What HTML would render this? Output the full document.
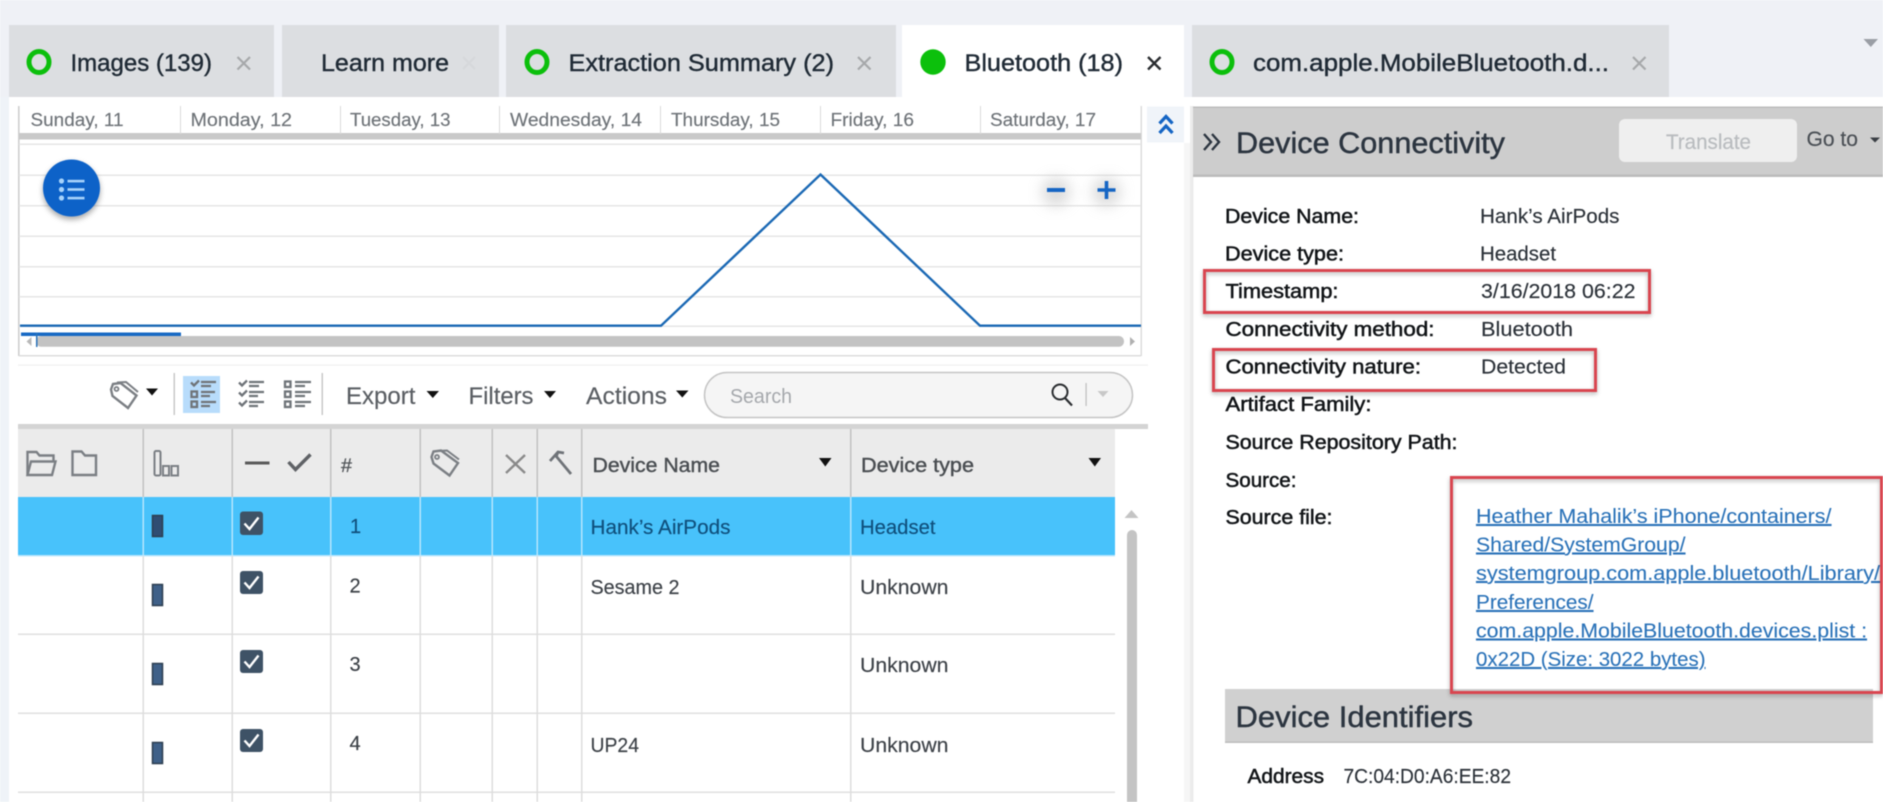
<!DOCTYPE html>
<html><head><meta charset="utf-8"><title>Bluetooth</title>
<style>
html,body{margin:0;padding:0;background:#fff;width:1883px;height:802px;overflow:hidden}
svg{display:block;filter:blur(.5px)}
text{font-family:"Liberation Sans",sans-serif;white-space:pre}
.tab{font-size:24px;fill:#1f2a35;stroke:#1f2a35;stroke-width:.4px}
.day{font-size:18px;fill:#6e7378;stroke:#6e7378;stroke-width:.15px}
.lab{font-size:20px;fill:#111417;stroke:#111417;stroke-width:.5px}
.val{font-size:20px;fill:#2b3138;stroke:#2b3138;stroke-width:.15px}
.lnk{font-size:20px;fill:#2a72b8;stroke:#2a72b8;stroke-width:.1px;text-decoration:underline}
.tool{font-size:24px;fill:#5a5e63;stroke:#5a5e63;stroke-width:.15px}
.cell{font-size:20px;fill:#3c4147;stroke:#3c4147;stroke-width:.15px}
.sel{font-size:20px;fill:#0f4f7c;stroke:#0f4f7c;stroke-width:.15px}
.hd{font-size:20px;fill:#4a4e52;stroke:#4a4e52;stroke-width:.4px}
.ttl{font-size:30px;fill:#2c3540;stroke:#2c3540;stroke-width:.45px}
.ic{fill:none;stroke:#7b7f84;stroke-width:2.4}
</style></head><body>
<svg width="1883" height="802" viewBox="0 0 1883 802" xmlns="http://www.w3.org/2000/svg" lang="en" shape-rendering="geometricPrecision">
<defs>
<filter id="sh" x="-50%" y="-50%" width="200%" height="200%"><feDropShadow dx="0" dy="3" stdDeviation="3" flood-color="#000" flood-opacity=".35"/></filter>
<filter id="sh2" x="-30%" y="-30%" width="160%" height="160%"><feDropShadow dx="0" dy="2" stdDeviation="2" flood-color="#000" flood-opacity=".3"/></filter>
<filter id="bl" x="-50%" y="-50%" width="200%" height="200%"><feGaussianBlur stdDeviation="7"/></filter>
</defs>

<!-- page background -->
<rect width="1883" height="97" fill="#eff1f6"/>
<rect y="97" width="9" height="705" fill="#eff3f8"/>

<!-- tabs -->
<rect x="9" y="25" width="265" height="72" fill="#dcdee1"/>
<rect x="282" y="25" width="217" height="72" fill="#dcdee1"/>
<rect x="506" y="25" width="390" height="72" fill="#dcdee1"/>
<rect x="902" y="25" width="282" height="72" fill="#fff"/>
<rect x="1192" y="25" width="477" height="72" fill="#dcdee1"/>

<ellipse cx="39" cy="62" rx="10" ry="10.5" fill="none" stroke="#0cbf0c" stroke-width="5"/>
<text class="tab" x="70.5" y="71" textLength="141.5" lengthAdjust="spacingAndGlyphs">Images (139)</text>
<path d="M237.5 57l12.5 12.5M250 57l-12.5 12.5" stroke="#a6a8aa" stroke-width="2.2" fill="none"/>

<text class="tab" x="321" y="71" textLength="128" lengthAdjust="spacingAndGlyphs">Learn more</text>
<path d="M463 57l12 12M475 57l-12 12" stroke="#d6d8db" stroke-width="2" fill="none"/>

<ellipse cx="537" cy="62" rx="10" ry="10.5" fill="none" stroke="#0cbf0c" stroke-width="5"/>
<text class="tab" x="568.5" y="71" textLength="265.5" lengthAdjust="spacingAndGlyphs">Extraction Summary (2)</text>
<path d="M858 57l12.5 12.5M870.5 57l-12.5 12.5" stroke="#a6a8aa" stroke-width="2.2" fill="none"/>

<circle cx="933" cy="62" r="12.7" fill="#0cc00c"/>
<text class="tab" x="964.5" y="71" textLength="158.5" lengthAdjust="spacingAndGlyphs">Bluetooth (18)</text>
<path d="M1148 57l12.5 12.5M1160.5 57l-12.5 12.5" stroke="#2a2d30" stroke-width="2.4" fill="none"/>

<ellipse cx="1222" cy="62" rx="10" ry="10.5" fill="none" stroke="#0cbf0c" stroke-width="5"/>
<text class="tab" x="1253" y="71" textLength="356" lengthAdjust="spacingAndGlyphs">com.apple.MobileBluetooth.d...</text>
<path d="M1633 57l12.5 12.5M1645.5 57l-12.5 12.5" stroke="#a6a8aa" stroke-width="2.2" fill="none"/>

<path d="M1863.5 39h14.5l-7.2 8z" fill="#9a9ea5"/>

<!-- timeline -->
<rect x="18" y="106" width="1.6" height="250" fill="#cfcfcf"/>
<rect x="1140.5" y="106" width="1.5" height="250" fill="#dcdcdc"/>
<rect x="19" y="133" width="1122" height="6.5" fill="#c9c9c9"/>
<g fill="#dadada">
<rect x="180" y="106" width="1" height="28"/><rect x="340" y="106" width="1" height="28"/><rect x="499" y="106" width="1" height="28"/><rect x="660" y="106" width="1" height="28"/><rect x="820" y="106" width="1" height="28"/><rect x="980" y="106" width="1" height="28"/>
</g>
<text class="day" x="30.5" y="126" textLength="93" lengthAdjust="spacingAndGlyphs">Sunday, 11</text>
<text class="day" x="190.5" y="126" textLength="101.5" lengthAdjust="spacingAndGlyphs">Monday, 12</text>
<text class="day" x="350" y="126" textLength="100.5" lengthAdjust="spacingAndGlyphs">Tuesday, 13</text>
<text class="day" x="510" y="126" textLength="132" lengthAdjust="spacingAndGlyphs">Wednesday, 14</text>
<text class="day" x="671" y="126" textLength="109" lengthAdjust="spacingAndGlyphs">Thursday, 15</text>
<text class="day" x="830.5" y="126" textLength="83.5" lengthAdjust="spacingAndGlyphs">Friday, 16</text>
<text class="day" x="990" y="126" textLength="106" lengthAdjust="spacingAndGlyphs">Saturday, 17</text>

<g fill="#e6e6e6">
<rect x="19" y="143.5" width="1122" height="1.5"/><rect x="19" y="174.5" width="1122" height="1.5"/><rect x="19" y="205" width="1122" height="1.5"/><rect x="19" y="235.5" width="1122" height="1.5"/><rect x="19" y="266" width="1122" height="1.5"/><rect x="19" y="296" width="1122" height="1.5"/><rect x="19" y="325.5" width="1122" height="1.5"/>
</g>
<path d="M20 325.7H661L820.5 174.5L980 325.7H1141" fill="none" stroke="#1a68b4" stroke-width="2.4"/>
<rect x="21" y="332.5" width="160" height="3.5" fill="#1769c4"/>
<rect x="36" y="336" width="1088" height="10.7" rx="5" fill="#c3c3c3"/>
<rect x="36" y="333" width="1.5" height="14" fill="#2a72b8"/>
<path d="M31.5 337l-5 4.5 5 4.5z" fill="#b8b8b8"/>
<path d="M1130 337l5 4.5-5 4.5z" fill="#b0b0b0"/>
<rect x="19" y="355" width="1122" height="1.5" fill="#dcdcdc"/>
<rect x="18" y="364.5" width="1130" height="1.2" fill="#f0f0f0"/>

<!-- round list button -->
<circle cx="71.5" cy="188" r="28.5" fill="#0f62c8" filter="url(#sh)"/>
<g fill="#a7d3fb"><circle cx="61.5" cy="181" r="2.6"/><circle cx="61.5" cy="189.5" r="2.6"/><circle cx="61.5" cy="198" r="2.6"/><rect x="67.5" y="179.8" width="17" height="2.6"/><rect x="67.5" y="188.2" width="17" height="2.6"/><rect x="67.5" y="196.8" width="17" height="2.6"/></g>

<!-- zoom -->
<circle cx="1056" cy="192" r="14" fill="#bbb" opacity=".55" filter="url(#bl)"/>
<circle cx="1106.5" cy="192" r="14" fill="#bbb" opacity=".55" filter="url(#bl)"/>
<rect x="1047" y="188" width="18" height="4" fill="#1565c4"/>
<path d="M1097.5 190h18M1106.5 181v18" stroke="#1565c4" stroke-width="3.6" fill="none"/>

<!-- collapse -->
<rect x="1147" y="106.5" width="37" height="36" fill="#f0f4f9"/>
<path d="M1159.5 123.5l6.500-7 6.500 7M1159.500 133l6.500-7 6.500 7" fill="none" stroke="#1565c4" stroke-width="3.2"/>

<!-- toolbar -->
<g class="ic">
<path d="M111 389.5l2-5.500 7.500-1 16 12.500-8.500 12.500-15.500-12z"/>
<path d="M117 382.500l9-.5 12 10" stroke-width="2"/>
<circle cx="116.500" cy="389" r="2" stroke-width="1.800"/>
</g>
<path d="M146 388.500h12l-6 7z" fill="#111"/>
<rect x="173.500" y="373" width="1.500" height="42" fill="#c8c8c8"/>
<rect x="183" y="376" width="37" height="37" fill="#b8dcfb"/>
<g fill="none" stroke="#6f7479" stroke-width="2.300">
<path d="M191 382.500l3 3 5-5"/><rect x="191.500" y="391.500" width="5.500" height="5.500"/><rect x="191.500" y="401.500" width="5.500" height="5.500"/>
<path d="M201 382h15M201 386h10M201 392h14M201 396h9M201 402h15M201 406h9"/>
<path d="M239 382.500l3 3 5-5M239 392.500l3 3 5-5M239 402.500l3 3 5-5"/>
<path d="M249 382h15M249 386h10M249 392h15M249 396h9M249 402h15M249 406h9"/>
<rect x="285" y="381.500" width="5.500" height="5.500"/><rect x="285" y="391.500" width="5.500" height="5.500"/><rect x="285" y="401.500" width="5.500" height="5.500"/>
<path d="M295 382h16M295 386h10M295 392h16M295 396h10M295 402h16M295 406h10"/>
</g>
<rect x="321.500" y="373" width="1.500" height="42" fill="#c8c8c8"/>

<text class="tool" x="346" y="404" textLength="69.500" lengthAdjust="spacingAndGlyphs">Export</text>
<path d="M426.500 391h12.500l-6.200 7z" fill="#111"/>
<text class="tool" x="468.500" y="404" textLength="65" lengthAdjust="spacingAndGlyphs">Filters</text>
<path d="M544 391h12l-6 7z" fill="#111"/>
<text class="tool" x="586" y="404" textLength="81" lengthAdjust="spacingAndGlyphs">Actions</text>
<path d="M676 390.500h12.500l-6.200 7z" fill="#111"/>

<rect x="704.500" y="372.500" width="428" height="45" rx="22.500" fill="#f5f5f5" stroke="#c4c4c4" stroke-width="1.500"/>
<text x="730" y="403" font-size="20" fill="#a5a8ac" textLength="62" lengthAdjust="spacingAndGlyphs">Search</text>
<circle cx="1060" cy="392" r="7.500" fill="none" stroke="#2a2d30" stroke-width="2"/>
<path d="M1065 398l7 7.500" stroke="#2a2d30" stroke-width="2.200" fill="none"/>
<rect x="1085.500" y="383" width="1.200" height="23" fill="#bdbdbd"/>
<path d="M1097.500 391h11l-5.500 6z" fill="#c8c8c8"/>

<!-- table -->
<rect x="18" y="424" width="1130" height="5" fill="#d4d4d4"/>
<rect x="18" y="429" width="1097" height="68" fill="#ebebeb"/>
<rect x="18" y="497" width="1097" height="58" fill="#48c2fb"/>
<rect x="18" y="555" width="1097" height="1.500" fill="#bfe8fc"/>
<g fill="#dfdfdf">
<rect x="18" y="633.500" width="1097" height="1.500"/><rect x="18" y="712.500" width="1097" height="1.500"/><rect x="18" y="791.500" width="1097" height="1.500"/>
</g>
<g fill="#c2c2c2">
<rect x="142.500" y="429" width="1.500" height="68"/><rect x="231.500" y="429" width="1.500" height="68"/><rect x="330" y="429" width="1.500" height="68"/><rect x="419.500" y="429" width="1.500" height="68"/><rect x="491.500" y="429" width="1.500" height="68"/><rect x="536.500" y="429" width="1.500" height="68"/><rect x="581" y="429" width="1.500" height="68"/><rect x="850" y="429" width="1.500" height="68"/>
</g>
<g fill="#b5e5fd">
<rect x="142.500" y="497" width="1.500" height="58"/><rect x="231.500" y="497" width="1.500" height="58"/><rect x="330" y="497" width="1.500" height="58"/><rect x="419.500" y="497" width="1.500" height="58"/><rect x="491.500" y="497" width="1.500" height="58"/><rect x="536.500" y="497" width="1.500" height="58"/><rect x="581" y="497" width="1.500" height="58"/><rect x="850" y="497" width="1.500" height="58"/>
</g>
<g fill="#dedede">
<rect x="142.500" y="556" width="1.500" height="246"/><rect x="231.500" y="556" width="1.500" height="246"/><rect x="330" y="556" width="1.500" height="246"/><rect x="419.500" y="556" width="1.500" height="246"/><rect x="491.500" y="556" width="1.500" height="246"/><rect x="536.500" y="556" width="1.500" height="246"/><rect x="581" y="556" width="1.500" height="246"/><rect x="850" y="556" width="1.500" height="246"/>
</g>

<!-- header icons -->
<g class="ic">
<path d="M27.500 475v-23h9l3 3.500h14v6"/><path d="M27.500 475l3.500-13.500h24.500l-3.500 13.500z"/>
<path d="M72.500 475v-23.500h9l3.500 4h11v19.500z"/>
<rect x="154.500" y="451" width="6" height="24.500" rx="1.500" stroke-width="2"/>
<rect x="163" y="466" width="6" height="9.500" stroke-width="2"/>
<rect x="171.500" y="466" width="6.500" height="9.500" stroke-width="2"/>
<path d="M431.500 457l2-5.500 7.500-1 17 12.500-8.500 12.500-16-12z"/>
<path d="M438 451l9-.5 12 9" stroke-width="2"/>
<circle cx="437" cy="457" r="2" stroke-width="1.800"/>
<path d="M506 455l19 18M525 455l-19 18" stroke="#8a8a8a"/>
<path d="M550 461l8-9 6 1M558 452l-2 5M556 456l15 18" stroke="#6f7378" stroke-width="2.800"/>
</g>
<rect x="245" y="461.500" width="24.500" height="3" fill="#5a5a5a"/>
<path d="M288.500 462l7 7.500 15-15" fill="none" stroke="#5f6266" stroke-width="3.400"/>
<text x="341" y="472" font-size="19" fill="#52565a" stroke="#52565a" stroke-width=".3" textLength="11" lengthAdjust="spacingAndGlyphs">#</text>
<text class="hd" x="592.500" y="472" textLength="127.500" lengthAdjust="spacingAndGlyphs">Device Name</text>
<path d="M819 458h12.500l-6.200 8.500z" fill="#111"/>
<text class="hd" x="861" y="472" textLength="113" lengthAdjust="spacingAndGlyphs">Device type</text>
<path d="M1088.500 458h12.500l-6.200 8.500z" fill="#111"/>

<!-- rows -->
<g fill="#3f6088" stroke="#2c3e50" stroke-width="1.500">
<rect x="152.500" y="515.500" width="10" height="21" fill="#2f4d72"/><rect x="152.500" y="584.500" width="10" height="21"/><rect x="152.500" y="663.500" width="10" height="21"/><rect x="152.500" y="742.500" width="10" height="21"/>
</g>
<g fill="#3e5266">
<rect x="240" y="511.500" width="23" height="23.500" rx="3"/><rect x="240" y="571" width="23" height="23" rx="3"/><rect x="240" y="650" width="23" height="23" rx="3"/><rect x="240" y="729" width="23" height="23" rx="3"/>
</g>
<g fill="none" stroke="#fff" stroke-width="2.400">
<path d="M244.500 523.500l5 5.500 9-11.500"/><path d="M244.500 582.500l5 5.500 9-11.500"/><path d="M244.500 661.500l5 5.500 9-11.500"/><path d="M244.500 740.500l5 5.500 9-11.500"/>
</g>
<text class="sel" x="350" y="533">1</text>
<text class="cell" x="349.500" y="592.500">2</text>
<text class="cell" x="349.500" y="671">3</text>
<text class="cell" x="349.500" y="750">4</text>

<text class="sel" x="590.500" y="534" textLength="140" lengthAdjust="spacingAndGlyphs">Hank’s AirPods</text>
<text class="sel" x="860" y="534" textLength="75.500" lengthAdjust="spacingAndGlyphs">Headset</text>
<text class="cell" x="590.500" y="594" textLength="89" lengthAdjust="spacingAndGlyphs">Sesame 2</text>
<text class="cell" x="860" y="594" textLength="88.500" lengthAdjust="spacingAndGlyphs">Unknown</text>
<text class="cell" x="860" y="672" textLength="88.500" lengthAdjust="spacingAndGlyphs">Unknown</text>
<text class="cell" x="590.500" y="752" textLength="48.500" lengthAdjust="spacingAndGlyphs">UP24</text>
<text class="cell" x="860" y="752" textLength="88.500" lengthAdjust="spacingAndGlyphs">Unknown</text>

<!-- table scrollbar -->
<path d="M1124.500 518l7-8 7 8z" fill="#c4c4c4"/>
<rect x="1127" y="530" width="10" height="280" rx="5" fill="#c4c4c4"/>

<!-- right panel -->
<rect x="1184" y="143" width="6" height="659" fill="#f6f6f6"/>
<rect x="1190" y="106" width="3.500" height="696" fill="#ececec"/>
<rect x="1193" y="106.500" width="690" height="70" fill="#cdcdcd"/>
<rect x="1193" y="106.500" width="690" height="1.500" fill="#bcbcbc"/>
<rect x="1193" y="174.500" width="690" height="2.500" fill="#bcbcbc"/>
<path d="M1204 134l7 8-7 8M1212 134l7 8-7 8" fill="none" stroke="#2c3540" stroke-width="2.400"/>
<text class="ttl" x="1236" y="153" textLength="269" lengthAdjust="spacingAndGlyphs">Device Connectivity</text>
<rect x="1619" y="119" width="178" height="43" rx="6" fill="#efefef"/>
<text x="1666" y="149" font-size="21" fill="#b9bcbf" stroke="#b9bcbf" stroke-width=".2" textLength="85" lengthAdjust="spacingAndGlyphs">Translate</text>
<text x="1806.500" y="146" font-size="21" fill="#4a4f55" stroke="#4a4f55" stroke-width=".15" textLength="51.500" lengthAdjust="spacingAndGlyphs">Go to</text>
<path d="M1870 137.500h10l-5 5z" fill="#3a3e44"/>

<!-- details -->
<text class="lab" x="1225" y="223" textLength="134" lengthAdjust="spacingAndGlyphs">Device Name:</text>
<text class="val" x="1480" y="223" textLength="139.500" lengthAdjust="spacingAndGlyphs">Hank’s AirPods</text>
<text class="lab" x="1225" y="260.500" textLength="119" lengthAdjust="spacingAndGlyphs">Device type:</text>
<text class="val" x="1480" y="260.500" textLength="76" lengthAdjust="spacingAndGlyphs">Headset</text>
<text class="lab" x="1225.500" y="298" textLength="113" lengthAdjust="spacingAndGlyphs">Timestamp:</text>
<text class="val" x="1481" y="298" textLength="154.500" lengthAdjust="spacingAndGlyphs">3/16/2018 06:22</text>
<text class="lab" x="1225.500" y="336" textLength="209" lengthAdjust="spacingAndGlyphs">Connectivity method:</text>
<text class="val" x="1481" y="336" textLength="92" lengthAdjust="spacingAndGlyphs">Bluetooth</text>
<text class="lab" x="1225.500" y="373.500" textLength="195.500" lengthAdjust="spacingAndGlyphs">Connectivity nature:</text>
<text class="val" x="1481" y="373.500" textLength="85" lengthAdjust="spacingAndGlyphs">Detected</text>
<text class="lab" x="1225.500" y="411" textLength="146" lengthAdjust="spacingAndGlyphs">Artifact Family:</text>
<text class="lab" x="1225.500" y="449" textLength="232" lengthAdjust="spacingAndGlyphs">Source Repository Path:</text>
<text class="lab" x="1225.500" y="487" textLength="71" lengthAdjust="spacingAndGlyphs">Source:</text>
<text class="lab" x="1225.500" y="524" textLength="107" lengthAdjust="spacingAndGlyphs">Source file:</text>

<text class="lnk" x="1476" y="523" textLength="355.500" lengthAdjust="spacingAndGlyphs">Heather Mahalik’s iPhone/containers/</text>
<text class="lnk" x="1476" y="551.500" textLength="209.500" lengthAdjust="spacingAndGlyphs">Shared/SystemGroup/</text>
<text class="lnk" x="1476" y="580" textLength="404" lengthAdjust="spacingAndGlyphs">systemgroup.com.apple.bluetooth/Library/</text>
<text class="lnk" x="1476" y="609" textLength="117.500" lengthAdjust="spacingAndGlyphs">Preferences/</text>
<text class="lnk" x="1476" y="637.500" textLength="391" lengthAdjust="spacingAndGlyphs">com.apple.MobileBluetooth.devices.plist :</text>
<text class="lnk" x="1476" y="666" textLength="229.500" lengthAdjust="spacingAndGlyphs">0x22D (Size: 3022 bytes)</text>

<!-- section -->
<rect x="1225" y="689" width="648" height="54" fill="#d0d0d0"/>
<rect x="1225" y="741.500" width="648" height="1.500" fill="#bdbdbd"/>
<text class="ttl" x="1235.500" y="727" textLength="237.500" lengthAdjust="spacingAndGlyphs">Device Identifiers</text>
<text class="lab" x="1247.500" y="783" textLength="76.500" lengthAdjust="spacingAndGlyphs">Address</text>
<text class="val" x="1343.500" y="783" textLength="167.500" lengthAdjust="spacingAndGlyphs">7C:04:D0:A6:EE:82</text>

<!-- red boxes -->
<g fill="none" stroke="#d9444f" stroke-width="3" filter="url(#sh2)">
<rect x="1204.500" y="270.500" width="445" height="42"/>
<rect x="1213.500" y="349.500" width="382" height="41"/>
<rect x="1451.500" y="477.500" width="430" height="215"/>
</g>
</svg>
</body></html>
